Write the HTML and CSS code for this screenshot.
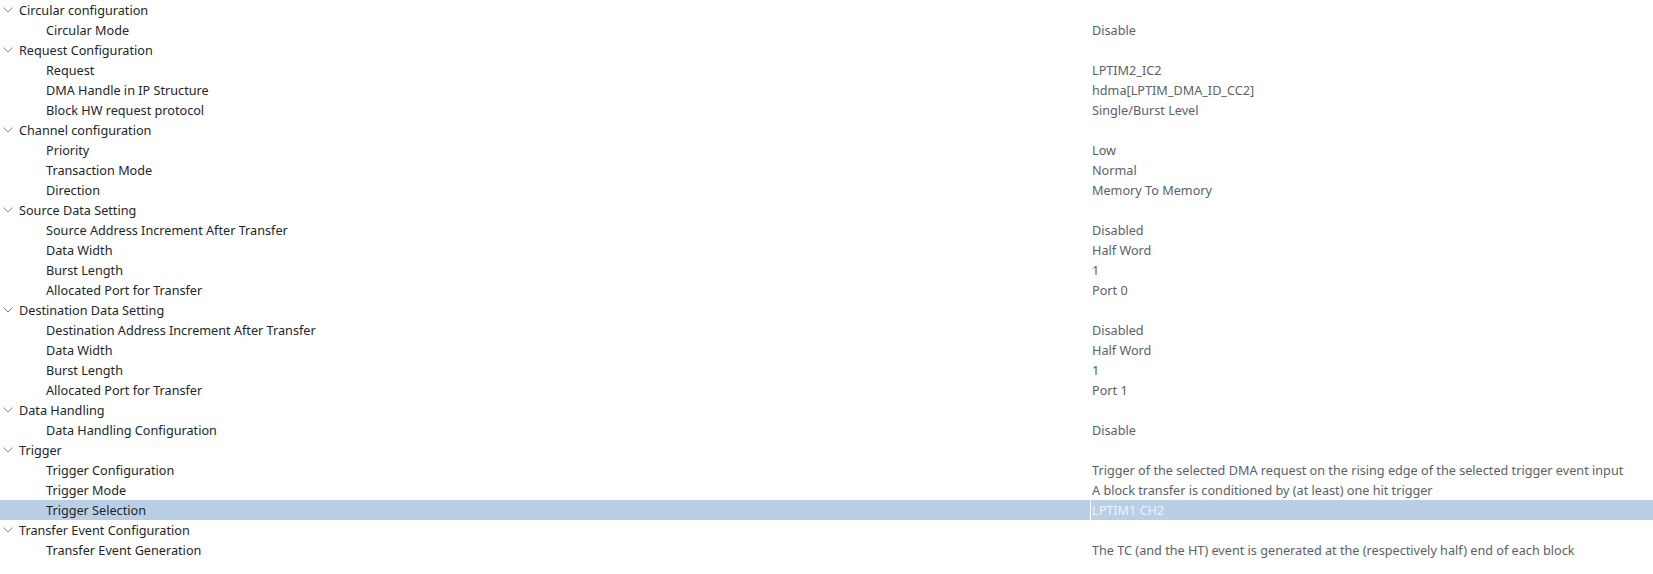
FILE: index.html
```html
<!DOCTYPE html>
<html>
<head>
<meta charset="utf-8">
<link rel="stylesheet" href="styles.css">
</head>
<body>
<div class="tree">
  <div class="row group"><div class="key"><svg class="chev" viewBox="0 0 10 6"><path d="M0.5 0.5 L5 5 L9.5 0.5"/></svg><span>Circular configuration</span></div><div class="val"></div></div>
  <div class="row"><div class="key child">Circular Mode</div><div class="val">Disable</div></div>
  <div class="row group"><div class="key"><svg class="chev" viewBox="0 0 10 6"><path d="M0.5 0.5 L5 5 L9.5 0.5"/></svg><span>Request Configuration</span></div><div class="val"></div></div>
  <div class="row"><div class="key child">Request</div><div class="val">LPTIM2_IC2</div></div>
  <div class="row"><div class="key child">DMA Handle in IP Structure</div><div class="val">hdma[LPTIM_DMA_ID_CC2]</div></div>
  <div class="row"><div class="key child">Block HW request protocol</div><div class="val">Single/Burst Level</div></div>
  <div class="row group"><div class="key"><svg class="chev" viewBox="0 0 10 6"><path d="M0.5 0.5 L5 5 L9.5 0.5"/></svg><span>Channel configuration</span></div><div class="val"></div></div>
  <div class="row"><div class="key child">Priority</div><div class="val">Low</div></div>
  <div class="row"><div class="key child">Transaction Mode</div><div class="val">Normal</div></div>
  <div class="row"><div class="key child">Direction</div><div class="val">Memory To Memory</div></div>
  <div class="row group"><div class="key"><svg class="chev" viewBox="0 0 10 6"><path d="M0.5 0.5 L5 5 L9.5 0.5"/></svg><span>Source Data Setting</span></div><div class="val"></div></div>
  <div class="row"><div class="key child">Source Address Increment After Transfer</div><div class="val">Disabled</div></div>
  <div class="row"><div class="key child">Data Width</div><div class="val">Half Word</div></div>
  <div class="row"><div class="key child">Burst Length</div><div class="val">1</div></div>
  <div class="row"><div class="key child">Allocated Port for Transfer</div><div class="val">Port 0</div></div>
  <div class="row group"><div class="key"><svg class="chev" viewBox="0 0 10 6"><path d="M0.5 0.5 L5 5 L9.5 0.5"/></svg><span>Destination Data Setting</span></div><div class="val"></div></div>
  <div class="row"><div class="key child">Destination Address Increment After Transfer</div><div class="val">Disabled</div></div>
  <div class="row"><div class="key child">Data Width</div><div class="val">Half Word</div></div>
  <div class="row"><div class="key child">Burst Length</div><div class="val">1</div></div>
  <div class="row"><div class="key child">Allocated Port for Transfer</div><div class="val">Port 1</div></div>
  <div class="row group"><div class="key"><svg class="chev" viewBox="0 0 10 6"><path d="M0.5 0.5 L5 5 L9.5 0.5"/></svg><span>Data Handling</span></div><div class="val"></div></div>
  <div class="row"><div class="key child">Data Handling Configuration</div><div class="val">Disable</div></div>
  <div class="row group"><div class="key"><svg class="chev" viewBox="0 0 10 6"><path d="M0.5 0.5 L5 5 L9.5 0.5"/></svg><span>Trigger</span></div><div class="val"></div></div>
  <div class="row"><div class="key child">Trigger Configuration</div><div class="val">Trigger of the selected DMA request on the rising edge of the selected trigger event input</div></div>
  <div class="row"><div class="key child">Trigger Mode</div><div class="val">A block transfer is conditioned by (at least) one hit trigger</div></div>
  <div class="row selected"><div class="key child">Trigger Selection</div><div class="val">LPTIM1 CH2</div></div>
  <div class="row group"><div class="key"><svg class="chev" viewBox="0 0 10 6"><path d="M0.5 0.5 L5 5 L9.5 0.5"/></svg><span>Transfer Event Configuration</span></div><div class="val"></div></div>
  <div class="row"><div class="key child">Transfer Event Generation</div><div class="val">The TC (and the HT) event is generated at the (respectively half) end of each block</div></div>
</div>
</body>
</html>
```

FILE: styles.css
```css
html, body {
  margin: 0;
  padding: 0;
  background: #ffffff;
}
body {
  font-family: "Noto Sans", "Open Sans", sans-serif;
  font-size: 12.67px;
  color: #232629;
}
.tree {
  display: flex;
  flex-direction: column;
}
.row {
  display: grid;
  grid-template-columns: 1090px 1fr;
  height: 20px;
  align-items: center;
}
.key {
  display: flex;
  align-items: center;
  white-space: nowrap;
  height: 20px;
  padding-bottom: 1px;
  box-sizing: border-box;
}
.key.child {
  padding-left: 46px;
}
.group .key span {
  margin-left: 6px;
}
.chev {
  width: 10px;
  height: 6px;
  margin-left: 3px;
  fill: none;
  stroke: #7f8488;
  stroke-width: 1;
}
.val {
  height: 20px;
  display: flex;
  align-items: center;
  padding-left: 2px;
  padding-bottom: 1px;
  box-sizing: border-box;
  color: #5c6166;
  white-space: nowrap;
}
.selected {
  background: #b9cfe6;
}
.selected .val {
  border-left: 1px solid #ffffff;
  padding-left: 1px;
  color: #eef3f9;
}
```
